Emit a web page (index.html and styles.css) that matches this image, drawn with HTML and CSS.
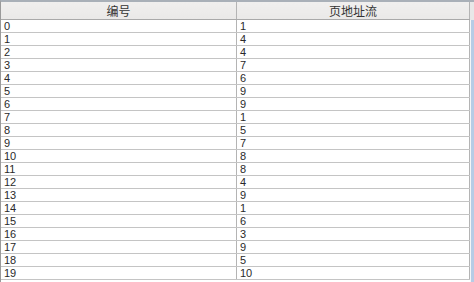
FILE: index.html
```html
<!DOCTYPE html>
<html>
<head>
<meta charset="utf-8">
<link rel="stylesheet" href="styles.css">
</head>
<body>
<div class="frame">
  <div class="pane">
    <table class="grid">
      <thead>
        <tr><th class="c1">编号</th><th class="c2">页地址流</th></tr>
      </thead>
      <tbody>
        <tr><td>0</td><td>1</td></tr>
        <tr><td>1</td><td>4</td></tr>
        <tr><td>2</td><td>4</td></tr>
        <tr><td>3</td><td>7</td></tr>
        <tr><td>4</td><td>6</td></tr>
        <tr><td>5</td><td>9</td></tr>
        <tr><td>6</td><td>9</td></tr>
        <tr><td>7</td><td>1</td></tr>
        <tr><td>8</td><td>5</td></tr>
        <tr><td>9</td><td>7</td></tr>
        <tr><td>10</td><td>8</td></tr>
        <tr><td>11</td><td>8</td></tr>
        <tr><td>12</td><td>4</td></tr>
        <tr><td>13</td><td>9</td></tr>
        <tr><td>14</td><td>1</td></tr>
        <tr><td>15</td><td>6</td></tr>
        <tr><td>16</td><td>3</td></tr>
        <tr><td>17</td><td>9</td></tr>
        <tr><td>18</td><td>5</td></tr>
        <tr><td>19</td><td>10</td></tr>
      </tbody>
    </table>
  </div>
  <div class="side">
    <div class="side-head"></div>
    <div class="side-body">
      <div class="side-gap"></div>
      <div class="side-bar"></div>
    </div>
  </div>
</div>
</body>
</html>
```

FILE: styles.css
```css
html, body {
  margin: 0;
  padding: 0;
  background: #ffffff;
}
body {
  font-family: "Liberation Sans", Arial, "Noto Sans CJK SC", sans-serif;
  font-size: 11px;
  color: #2a2a2a;
}
.frame {
  display: flex;
  width: 474px;
  height: 282px;
  overflow: hidden;
}
.pane {
  width: 470px;
  border-left: 1px solid #9a9a9a;
  border-top: 2px solid #a9b0b8;
  box-sizing: border-box;
}
.grid {
  border-collapse: collapse;
  width: 100%;
  table-layout: fixed;
}
.grid th {
  height: 17px;
  padding: 0;
  background: linear-gradient(#f0efee, #eae9e8);
  font-weight: normal;
  font-size: 12px;
  color: #333333;
  text-align: center;
  border-right: 1px solid #b4b4b4;
  border-bottom: 1px solid #a9a9a9;
  font-family: "Liberation Sans", "Noto Sans CJK SC", sans-serif;
}
.grid th.c1 {
  width: 235px;
}
.grid td {
  height: 12px;
  padding: 0 0 0 3px;
  line-height: 12px;
  border-right: 1px solid #b4b4b4;
  border-bottom: 1px solid #c4c4c4;
  text-align: left;
  white-space: nowrap;
}
.side {
  width: 4px;
  display: flex;
  flex-direction: column;
}
.side-head {
  height: 20px;
  background: #e8e8e8;
  border-top: 2px solid #a9b0b8;
  box-sizing: border-box;
}
.side-body {
  flex: 1;
  display: flex;
}
.side-gap {
  width: 1px;
  background: #f4f6f8;
}
.side-bar {
  flex: 1;
  background: #b6cce6;
}
```
